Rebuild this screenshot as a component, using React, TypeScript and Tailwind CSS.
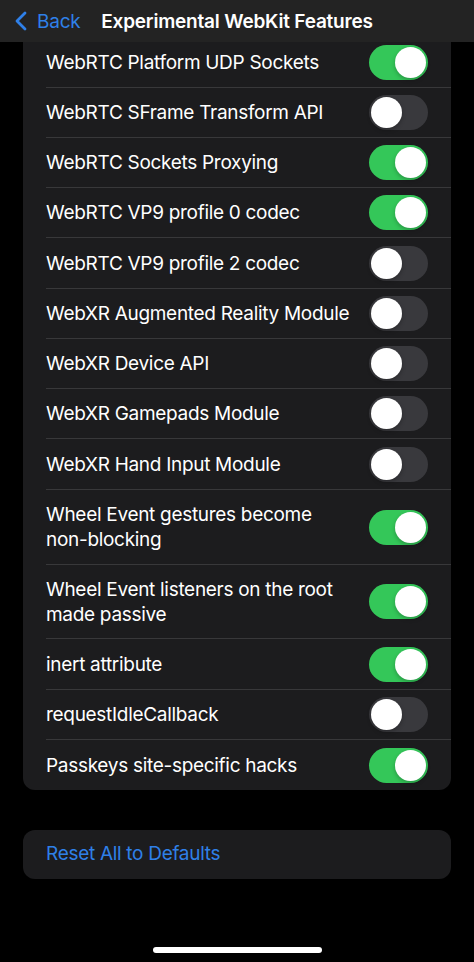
import React from "react";

type Row = { label: string[]; on: boolean; h: string };

const rows: Row[] = [
  { label: ["WebRTC Platform UDP Sockets"], on: true, h: "h-[50px]" },
  { label: ["WebRTC SFrame Transform API"], on: false, h: "h-[50px]" },
  { label: ["WebRTC Sockets Proxying"], on: true, h: "h-[50px]" },
  { label: ["WebRTC VP9 profile 0 codec"], on: true, h: "h-[50px]" },
  { label: ["WebRTC VP9 profile 2 codec"], on: false, h: "h-[51px]" },
  { label: ["WebXR Augmented Reality Module"], on: false, h: "h-[50px]" },
  { label: ["WebXR Device API"], on: false, h: "h-[50px]" },
  { label: ["WebXR Gamepads Module"], on: false, h: "h-[50px]" },
  { label: ["WebXR Hand Input Module"], on: false, h: "h-[51px]" },
  { label: ["Wheel Event gestures become", "non-blocking"], on: true, h: "h-[75px]" },
  { label: ["Wheel Event listeners on the root", "made passive"], on: true, h: "h-[74px]" },
  { label: ["inert attribute"], on: true, h: "h-[51px]" },
  { label: ["requestIdleCallback"], on: false, h: "h-[50px]" },
  { label: ["Passkeys site-specific hacks"], on: true, h: "h-[50px]" },
];

function Toggle({ on }: { on: boolean }) {
  return (
    <div
      className={`flex h-[35px] w-[59px] shrink-0 items-center rounded-full p-[2px] ${
        on ? "justify-end bg-[#34c759]" : "justify-start bg-[#39393d]"
      }`}
    >
      <div className="h-[31px] w-[31px] rounded-full bg-white shadow-[0_2px_4px_rgba(0,0,0,0.25)]" />
    </div>
  );
}

export default function App() {
  return (
    <div
      className="relative min-h-[962px] w-full bg-black text-white"
      style={{ fontFamily: "Inter, 'Noto Sans', sans-serif" }}
    >
      <div className="absolute left-0 right-0 top-0 z-10 flex h-[42px] items-center justify-center bg-[#232323]">
        <div className="absolute left-[13px] top-0 flex h-full items-center gap-[8px] text-[#2f80e8]">
          <svg width="16" height="20" viewBox="0 0 16 20" fill="none">
            <path
              d="M12 2 L4 10 L12 18"
              stroke="#2f80e8"
              strokeWidth="2.8"
              strokeLinecap="round"
              strokeLinejoin="round"
            />
          </svg>
          <span className="text-[19px] leading-none tracking-[-0.2px]">Back</span>
        </div>
        <span className="text-[19px] font-semibold leading-none tracking-[-0.2px]">
          Experimental WebKit Features
        </span>
      </div>

      <div className="flex flex-col px-[23px] pt-[38px]">
        <div className="rounded-b-[12px] bg-[#1c1c1e] pl-[23px]">
          {rows.map((r, i) => (
            <div
              key={i}
              className={`flex items-center justify-between pr-[23px] ${r.h} ${
                i < rows.length - 1 ? "border-b border-[#38383a]" : ""
              }`}
            >
              <div className="flex flex-col text-[19px] leading-[25px] tracking-[-0.3px] text-white">
                {r.label.map((l, j) => (
                  <span key={j} className="whitespace-nowrap">
                    {l}
                  </span>
                ))}
              </div>
              <Toggle on={r.on} />
            </div>
          ))}
        </div>

        <div className="mt-[40px] flex h-[49px] items-center rounded-[12px] bg-[#1c1c1e] pl-[23px]">
          <span className="text-[19px] tracking-[-0.3px] text-[#2f80e8]">Reset All to Defaults</span>
        </div>
      </div>

      <div className="absolute bottom-[9px] left-0 right-0 flex justify-center">
        <div className="h-[6px] w-[169px] rounded-full bg-white" />
      </div>
    </div>
  );
}
